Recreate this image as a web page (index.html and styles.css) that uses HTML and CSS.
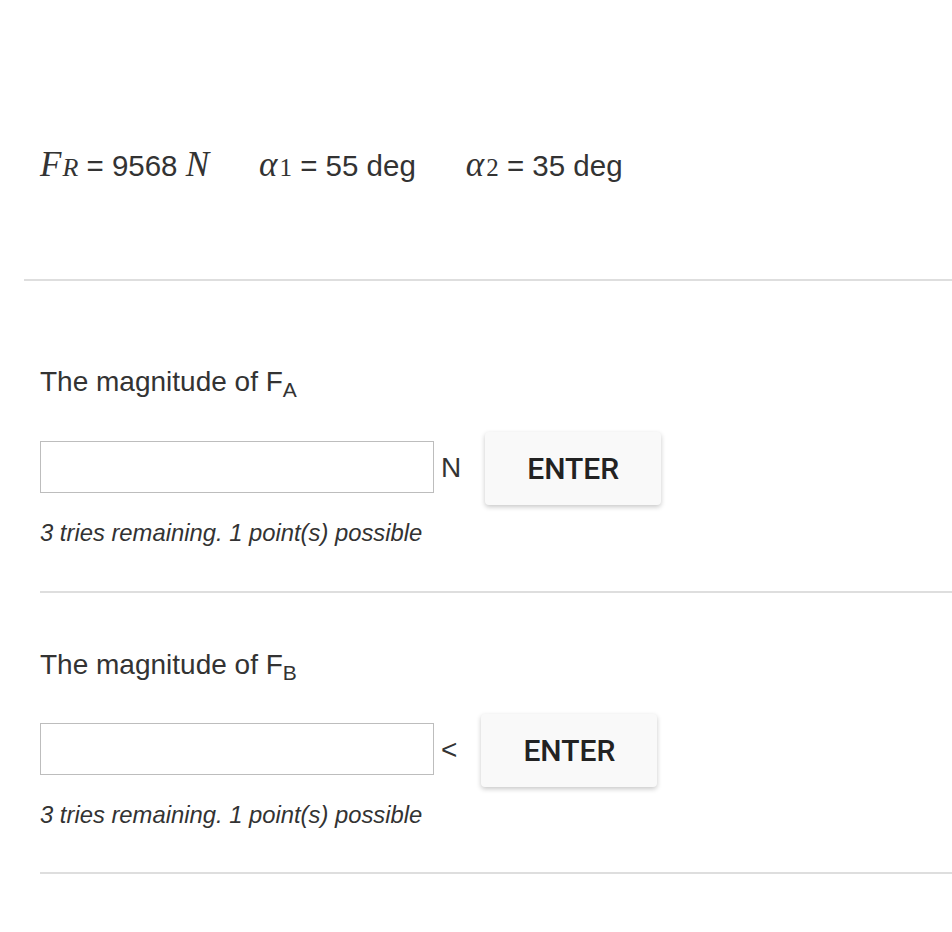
FILE: index.html
```html
<!DOCTYPE html>
<html>
<head>
<meta charset="utf-8">
<link rel="stylesheet" href="styles.css">
</head>
<body>
<div class="page">
  <div class="given">
    <span class="grp"><i class="mv">F</i><sub class="ms">R</sub><span class="eq"> = 9568 </span><i class="mv">N</i></span>
    <span class="grp"><i class="mv">α</i><sub class="mn">1</sub><span class="eq"> = 55 deg</span></span>
    <span class="grp"><i class="mv">α</i><sub class="mn">2</sub><span class="eq"> = 35 deg</span></span>
  </div>
  <hr class="rule rule-top">

  <section class="part part-first">
    <p class="label">The magnitude of F<sub class="sub">A</sub></p>
    <div class="answer">
      <input class="field" type="text">
      <span class="unit">N</span>
      <button class="enter">ENTER</button>
    </div>
    <p class="tries">3 tries remaining. 1 point(s) possible</p>
    <hr class="rule">
  </section>

  <section class="part part-second">
    <p class="label">The magnitude of F<sub class="sub">B</sub></p>
    <div class="answer">
      <input class="field" type="text">
      <span class="unit">&lt;</span>
      <button class="enter">ENTER</button>
    </div>
    <p class="tries">3 tries remaining. 1 point(s) possible</p>
    <hr class="rule">
  </section>
</div>
</body>
</html>
```
FILE: styles.css
```css
html, body {
  margin: 0;
  padding: 0;
  background: #fff;
}
body {
  font-family: "Liberation Sans", Arial, sans-serif;
  color: #333;
  overflow: hidden;
}
.page {
  width: 952px;
}
.given {
  display: flex;
  align-items: baseline;
  gap: 50px;
  padding: 150px 0 0 40px;
  height: 30px;
  line-height: 30px;
  white-space: pre;
}
.grp {
  display: inline-flex;
  align-items: baseline;
}
.mv {
  font-family: "Liberation Serif", "Times New Roman", serif;
  font-style: italic;
  font-size: 35px;
  color: #333;
}
.ms {
  font-family: "Liberation Serif", "Times New Roman", serif;
  font-style: italic;
  font-size: 26px;
  vertical-align: -6px;
  line-height: 1;
  margin-left: 1px;
}
.mn {
  font-family: "Liberation Serif", "Times New Roman", serif;
  font-size: 25px;
  vertical-align: -7px;
  line-height: 1;
  margin-left: 2px;
}
.eq {
  font-size: 29.5px;
}
.rule {
  border: 0;
  height: 2px;
  background: #dedede;
  margin: 0;
}
.rule-top {
  margin: 99px 0 0 24px;
}
.part {
  padding-left: 40px;
}
.label {
  margin: 57px 0 0;
  font-size: 28px;
  line-height: 30px;
}
.part-first .label {
  margin-top: 86px;
}
.sub {
  font-size: 21px;
  vertical-align: -6px;
  line-height: 1;
}
.answer {
  display: flex;
  align-items: flex-start;
  margin-top: 32px;
  height: 73px;
}
.part-second .answer {
  margin-top: 31px;
}
.field {
  box-sizing: border-box;
  width: 394px;
  height: 52px;
  border: 1px solid #bdbdbd;
  margin: 9px 0 0;
  padding: 0 8px;
  background: #fff;
  font-size: 22px;
  outline: none;
}
.unit {
  font-size: 28px;
  line-height: 32px;
  margin: 20px 0 0 7px;
  color: #333;
}
.enter {
  box-sizing: border-box;
  width: 176px;
  height: 73px;
  margin-left: 24px;
  border: 0;
  border-radius: 4px;
  background: #f9f9f9;
  box-shadow: 0 2px 5px rgba(0, 0, 0, 0.22);
  font-family: Roboto, "Liberation Sans", sans-serif;
  font-weight: 500;
  font-size: 30px;
  color: #222;
  padding: 0;
}
.tries {
  margin: 14px 0 0;
  font-size: 23.8px;
  line-height: 28px;
  font-style: italic;
}
.part .rule {
  margin-top: 44px;
}
.part-second .rule {
  margin-top: 43px;
}
```
